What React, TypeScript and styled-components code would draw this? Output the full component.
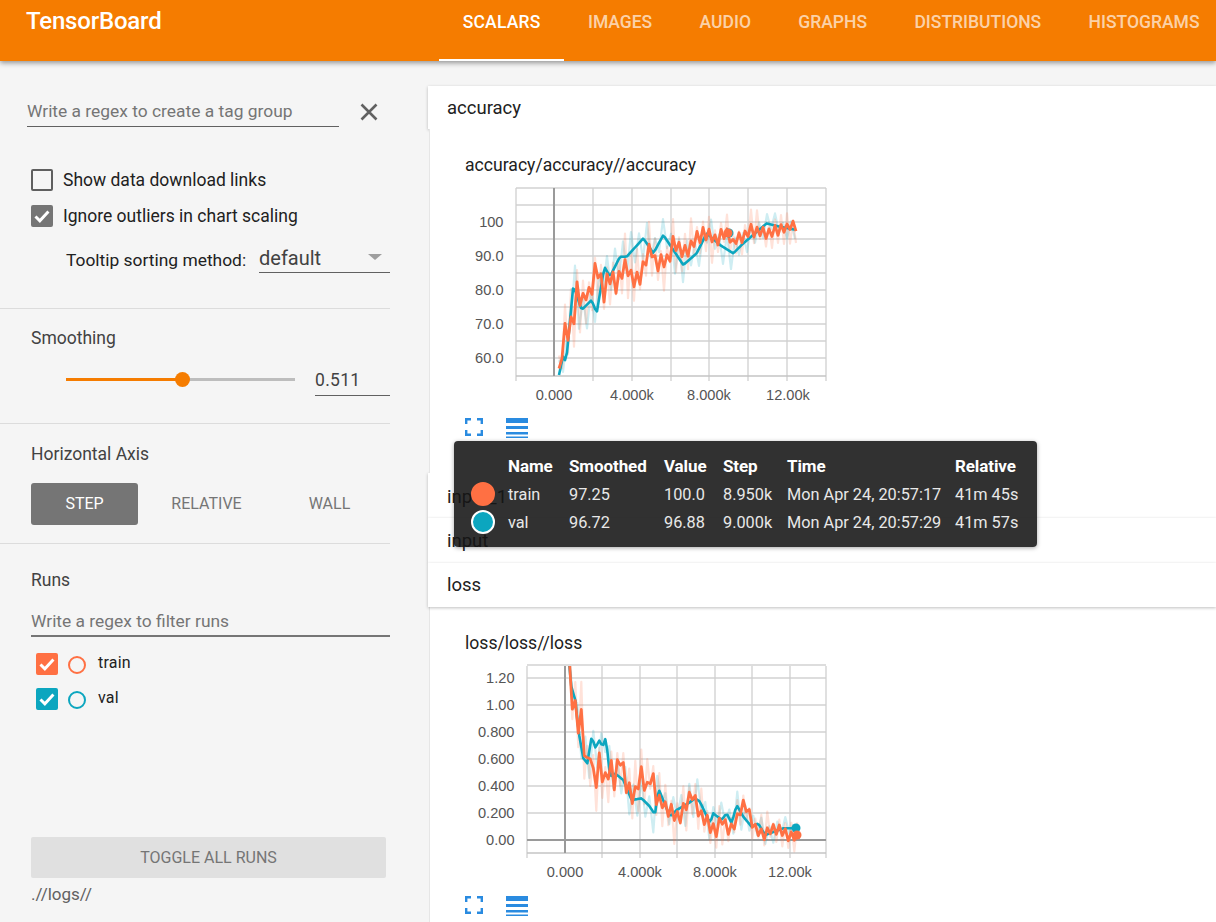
import React from 'react';
import styled, { createGlobalStyle } from 'styled-components';

const ORANGE = '#ff7043';
const TEAL = '#0ca6bf';
const SMOOTHING = 0.507;

const GlobalStyle = createGlobalStyle`
	html, body {
		margin: 0;
		padding: 0;
		background: #f5f5f5;
		font-family: Roboto, 'Liberation Sans', sans-serif;
		color: #212121;
	}
	* {
		box-sizing: border-box;
	}
`;

const Page = styled.div`
	width: 1216px;
	height: 922px;
	overflow: hidden;
	display: flex;
	flex-direction: column;
`;

const Toolbar = styled.header`
	flex: none;
	height: 61px;
	background: #f57c00;
	box-shadow: 0 2px 5px rgba(0, 0, 0, 0.4);
	display: flex;
	position: relative;
	z-index: 5;
`;

const Brand = styled.div`
	flex: none;
	width: 439px;
	padding: 7px 0 0 26px;
	font-size: 24px;
	line-height: 28px;
	font-weight: 500;
	letter-spacing: -0.2px;
	color: #fff;
`;

const Tabs = styled.nav`
	flex: none;
	display: flex;
	height: 61px;
`;

const Tab = styled.div<{ $active?: boolean }>`
	padding: 11px 23.7px 0;
	height: 61px;
	font-size: 17.5px;
	line-height: 22px;
	font-weight: 500;
	white-space: nowrap;
	letter-spacing: ${(p) => (p.$active ? 0.2 : 0)}px;
	color: ${(p) => (p.$active ? '#fff' : 'rgba(255, 255, 255, 0.68)')};
	border-bottom: 2px solid ${(p) => (p.$active ? '#fff' : 'transparent')};
`;

const Body = styled.div`
	flex: 1;
	display: flex;
	min-height: 0;
`;

const Sidebar = styled.aside`
	flex: none;
	width: 428px;
	height: 861px;
	display: flex;
	flex-direction: column;
	padding-right: 38px;
`;

const Section = styled.section<{ $height: number; $top: number }>`
	flex: none;
	height: ${(p) => p.$height}px;
	padding: ${(p) => p.$top}px 0 0 31px;
	border-bottom: 1px solid #dcdcdc;
`;

const BottomSection = styled.section`
	flex: 1;
	display: flex;
	flex-direction: column;
	padding: 25px 0 0 31px;
`;

const SectionTitle = styled.div`
	font-size: 17.5px;
	line-height: 22px;
	color: #424242;
`;

const AxisTitle = styled(SectionTitle)`
	padding-top: 1px;
	margin-bottom: -1px;
`;

const TagRow = styled.div`
	display: flex;
	align-items: flex-start;
	margin-left: -4px;
`;

const TextField = styled.input<{ $width: number; $thick?: boolean }>`
	width: ${(p) => p.$width}px;
	height: ${(p) => (p.$thick ? 30 : 32)}px;
	margin-top: ${(p) => (p.$thick ? 16 : 0)}px;
	flex: none;
	padding: 0;
	border: 0;
	border-bottom: ${(p) => (p.$thick ? 2 : 1)}px solid ${(p) => (p.$thick ? '#757575' : '#616161')};
	background: transparent;
	outline: none;
	font-family: inherit;
	font-size: 17.4px;
	&::placeholder {
		color: #757575;
		opacity: 1;
	}
`;

const ClearIcon = styled.svg`
	margin: 8px 0 0 21px;
	display: block;
`;

const CheckRow = styled.div<{ $top: number }>`
	display: flex;
	align-items: center;
	gap: 10px;
	height: 24px;
	margin-top: ${(p) => p.$top}px;
	font-size: 17.5px;
	color: #212121;
`;

const Box = styled.span<{ $color?: string; $size: number }>`
	flex: none;
	width: ${(p) => p.$size}px;
	height: ${(p) => p.$size}px;
	border-radius: 2px;
	border: 2px solid ${(p) => p.$color || '#5f5f5f'};
	background: ${(p) => p.$color || 'transparent'};
	display: flex;
	align-items: center;
	justify-content: center;
`;

const SortRow = styled.div`
	display: flex;
	align-items: flex-end;
	margin: 14px 0 0 35px;
	font-size: 17.4px;
`;

const SortLabel = styled.span`
	line-height: 24px;
	padding-bottom: 1px;
	width: 193px;
`;

const Dropdown = styled.div`
	position: relative;
	width: 131px;
	height: 31px;
	padding-top: 3px;
	border-bottom: 1px solid #616161;
	font-size: 20px;
	line-height: 27px;
	color: #424242;
`;

const Caret = styled.span`
	position: absolute;
	right: 8px;
	top: 12px;
	width: 0;
	height: 0;
	border-left: 7px solid transparent;
	border-right: 7px solid transparent;
	border-top: 6px solid #9e9e9e;
`;

const SliderRow = styled.div`
	display: flex;
	align-items: center;
	margin: 14px 0 0 35px;
`;

const SliderTrack = styled.div`
	position: relative;
	width: 229px;
	height: 3px;
	background: #bdbdbd;
`;

const SliderFill = styled.div`
	height: 3px;
	background: #f57c00;
`;

const SliderThumb = styled.span`
	position: absolute;
	top: -6px;
	width: 15px;
	height: 15px;
	margin-left: -7.5px;
	border-radius: 50%;
	background: #f57c00;
`;

const SliderValue = styled.div`
	margin-left: 20px;
	width: 75px;
	height: 33px;
	border-bottom: 1px solid #616161;
	font-size: 17.5px;
	line-height: 35px;
	letter-spacing: 0.3px;
	color: #424242;
`;

const AxisButtons = styled.div`
	display: flex;
	margin-top: 19px;
`;

const AxisButton = styled.div<{ $active?: boolean; $width: number }>`
	width: ${(p) => p.$width}px;
	height: 42px;
	padding-bottom: 1px;
	border-radius: 3px;
	display: flex;
	align-items: center;
	justify-content: center;
	font-size: 16px;
	color: ${(p) => (p.$active ? '#fff' : '#757575')};
	background: ${(p) => (p.$active ? '#757575' : 'transparent')};
`;

const RunRow = styled.div<{ $top: number }>`
	display: flex;
	align-items: center;
	height: 22px;
	flex: none;
	margin: ${(p) => p.$top}px 0 0 5px;
`;

const RunRing = styled.span<{ $color: string }>`
	width: 18px;
	height: 18px;
	margin: 1px 12px 0 10px;
	border-radius: 50%;
	border: 2px solid ${(p) => p.$color};
`;

const RunName = styled.span`
	font-size: 16px;
	line-height: 20px;
	margin-top: -3px;
	letter-spacing: 0.2px;
`;

const ToggleButton = styled.div`
	margin-top: auto;
	width: 355px;
	height: 41px;
	flex: none;
	border-radius: 2px;
	background: #e0e0e0;
	color: #757575;
	font-size: 16px;
	display: flex;
	align-items: center;
	justify-content: center;
`;

const LogDir = styled.div`
	font-size: 17px;
	line-height: 20px;
	margin: 6px 0 18px;
	color: #616161;
`;

const Main = styled.main`
	flex: 1;
	min-width: 0;
	padding-top: 25px;
`;

const CategoryHead = styled.div<{ $height: number; $top: number }>`
	height: ${(p) => p.$height}px;
	padding: ${(p) => p.$top}px 0 0 19px;
	background: #fff;
	font-size: 18.5px;
	line-height: 22px;
	color: #212121;
	box-shadow: 0 1px 3px rgba(0, 0, 0, 0.25);
	position: relative;
	z-index: 1;
`;

const CategoryPanel = styled.div`
	position: relative;
	margin-left: 1px;
	padding-top: 25px;
	background: #fff;
	border-left: 1px solid #e6e6e6;
`;

const AccuracyPanel = styled(CategoryPanel)`
	height: 344px;
	z-index: 3;
	background: transparent;
`;

const PanelSheet = styled.div`
	position: absolute;
	inset: 0;
	background: #fff;
	z-index: -1;
`;

const LossPanel = styled(CategoryPanel)`
	height: 320px;
`;

const ChartTitle = styled.div`
	padding-left: 35px;
	font-size: 17.6px;
	line-height: 22px;
	color: #212121;
`;

const ChartSvg = styled.svg`
	display: block;
	margin: 4px 0 0 30px;
`;

const AxisText = styled.text`
	font-family: 'Liberation Sans', Arial, sans-serif;
	font-size: 14.6px;
	fill: #555;
`;

const ChartActions = styled.div`
	display: flex;
	gap: 23px;
	margin: 13px 0 0 35px;
`;

const ActionIcon = styled.svg`
	display: block;
	fill: #2a8be0;
`;

const Tooltip = styled.div`
	position: absolute;
	left: 24px;
	top: 312px;
	width: 583px;
	height: 106px;
	padding: 11px 0 0 17px;
	border-radius: 4px;
	background: rgba(20, 20, 20, 0.88);
	box-shadow: 0 1px 4px rgba(0, 0, 0, 0.35);
	color: #fff;
	font-size: 16.3px;
`;

const TooltipRow = styled.div<{ $head?: boolean }>`
	display: grid;
	grid-template-columns: 37px 61px 95px 59px 64px 168px 82px;
	height: 28px;
	align-items: center;
	white-space: nowrap;
	font-size: ${(p) => (p.$head ? 17 : 16.3)}px;
	font-weight: ${(p) => (p.$head ? 700 : 400)};
	letter-spacing: ${(p) => (p.$head ? -0.1 : 0)}px;
	color: ${(p) => (p.$head ? '#fff' : '#e8e8e8')};
`;

const TooltipDot = styled.span<{ $color: string; $ring?: boolean }>`
	width: 24px;
	height: 24px;
	border-radius: 50%;
	background: ${(p) => p.$color};
	border: 2px solid ${(p) => (p.$ring ? '#fff' : p.$color)};
`;

type Pt = [number, number];

const accVal: Pt[] = [[327, 615], [340, 555], [348, 580], [370, 345], [395, 420], [425, 390], [440, 430], [463, 290], [480, 320], [510, 260], [530, 260], [580, 205], [610, 250], [640, 195], [670, 240], [700, 285], [740, 250], [770, 190], [810, 225], [850, 250], [880, 220], [950, 160], [990, 170], [1040, 180]];
const accTrain: Pt[] = [[327, 615], [335, 530], [345, 490], [370, 440], [382, 350], [395, 420], [405, 330], [415, 400], [440, 280], [460, 370], [480, 320], [500, 340], [530, 270], [545, 340], [570, 310], [600, 235], [620, 280], [650, 280], [670, 210], [700, 250], [740, 210], [765, 180], [790, 210], [830, 185], [850, 220], [900, 180], [960, 190], [1000, 170], [1040, 170]];
const lossVal: Pt[] = [[358, 45], [365, 120], [375, 140], [385, 240], [400, 325], [412, 340], [425, 260], [437, 295], [447, 270], [458, 290], [468, 262], [480, 380], [495, 370], [520, 390], [545, 450], [575, 445], [600, 470], [615, 495], [625, 415], [660, 500], [680, 480], [715, 460], [735, 445], [750, 455], [780, 520], [790, 490], [815, 510], [830, 490], [845, 520], [860, 465], [880, 500], [905, 530], [925, 520], [945, 555], [1000, 535], [1040, 535]];
const lossTrain: Pt[] = [[358, 45], [362, 125], [375, 160], [378, 225], [395, 190], [400, 260], [412, 345], [425, 300], [432, 395], [452, 335], [462, 405], [480, 345], [495, 395], [510, 320], [530, 400], [550, 445], [570, 370], [590, 420], [605, 350], [620, 450], [650, 470], [680, 510], [725, 430], [760, 510], [795, 540], [815, 510], [845, 540], [880, 460], [915, 530], [935, 555], [960, 540], [985, 535], [1010, 555], [1045, 555]];

// interpolate hand-read points and add seeded jitter so lines look like noisy training data
const buildLine = (pts: Pt[], ox: number, oy: number, noise: number, seed: number, step = 8) => {
	let s = seed;
	const rnd = () => {
		s = (s * 1664525 + 1013904223) % 4294967296;
		return s / 4294967296;
	};
	const out: string[] = [];
	const x0 = pts[0][0];
	const x1 = pts[pts.length - 1][0];
	let i = 0;
	let flip = 1;
	for (let x = x0; x <= x1; x += step) {
		while (i < pts.length - 2 && pts[i + 1][0] < x) i++;
		const [ax, ay] = pts[i];
		const [bx, by] = pts[i + 1];
		const y = ay + ((by - ay) * (x - ax)) / (bx - ax);
		const decay = 1 - ((x - x0) / (x1 - x0)) * 0.6;
		flip = -flip;
		const jitter = noise === 0 ? 0 : flip * (0.3 + 0.7 * rnd()) * noise * decay;
		out.push(`${(ox + x / 3).toFixed(1)},${(oy + (y + jitter) / 3).toFixed(1)}`);
	}
	return out.join(' ');
};

interface ChartProps {
	id: string;
	top: number;
	left: number;
	bottom: number;
	originY: number;
	xs: number[];
	xLabels: [number, string][];
	yLines: number[];
	yLabels: [number, string][];
	zeroY?: number;
	zeroX: number;
	val: Pt[];
	train: Pt[];
	dots: [number, number, string][];
}

const Chart: React.FC<ChartProps> = ({ id, top, left, bottom, originY, xs, xLabels, yLines, yLabels, zeroX, zeroY, val, train, dots }) => (
	<ChartSvg width={372} height={225} viewBox={`460 ${top} 372 225`}>
		<defs>
			<clipPath id={id}>
				<rect x={left} y={top + 8} width={826 - left} height={bottom - top - 8} />
			</clipPath>
		</defs>
		{yLines.map((y) => (
			<line key={y} x1={left} x2={826} y1={y} y2={y} stroke='#d2d2d2' strokeWidth={1.3} />
		))}
		{xs.map((x) => (
			<line key={x} x1={x} x2={x} y1={top + 8} y2={bottom + 5} stroke='#cfcfcf' strokeWidth={1.3} />
		))}
		<line x1={left} x2={826} y1={bottom} y2={bottom} stroke='#c4c4c4' strokeWidth={1.3} />
		<line x1={zeroX} x2={zeroX} y1={top + 8} y2={bottom} stroke='#9a9a9a' strokeWidth={2} />
		{zeroY ? <line x1={left} x2={826} y1={zeroY} y2={zeroY} stroke='#9a9a9a' strokeWidth={2} /> : null}
		<g clipPath={`url(#${id})`} fill='none' strokeLinejoin='round'>
			<polyline points={buildLine(val, 450, originY, 95, 11, 12)} stroke={TEAL} strokeOpacity={0.2} strokeWidth={2.2} />
			<polyline points={buildLine(train, 450, originY, 125, 23, 9)} stroke={ORANGE} strokeOpacity={0.2} strokeWidth={2.2} />
			<polyline points={buildLine(val, 450, originY, 0, 5, 6)} stroke={TEAL} strokeWidth={2.6} />
			<polyline points={buildLine(train, 450, originY, 42, 7, 9)} stroke={ORANGE} strokeWidth={2.8} />
		</g>
		{dots.map(([cx, cy, color]) => (
			<circle key={color} cx={cx} cy={cy} r={4.5} fill={color} />
		))}
		{xLabels.map(([x, label]) => (
			<AxisText key={label} x={x} y={bottom + 24} textAnchor='middle'>
				{label}
			</AxisText>
		))}
		{yLabels.map(([y, label]) => (
			<AxisText key={label} x={left - 12.5} y={y + 5} textAnchor='end'>
				{label}
			</AxisText>
		))}
	</ChartSvg>
);

const Actions: React.FC = () => (
	<ChartActions>
		<ActionIcon width={18} height={18} viewBox='0 0 18 18'>
			<path d='M0 0h6v2.4H2.4V6H0zM12 0h6v6h-2.4V2.4H12zM0 12h2.4v3.6H6V18H0zM15.6 12H18v6h-6v-2.4h3.6z' />
		</ActionIcon>
		<ActionIcon width={22} height={20} viewBox='0 0 22 20'>
			<path d='M0 0h22v5H0zM0 8h22v3H0zM0 14h22v2.4H0zM0 18.6h22V20H0z' />
		</ActionIcon>
	</ChartActions>
);

const Check: React.FC<{ size: number }> = ({ size }) => (
	<svg width={size} height={size} viewBox='0 0 16 16' fill='none'>
		<path d='M2.2 8.4l3.9 3.9 7.6-8.2' stroke='#fff' strokeWidth={2.6} />
	</svg>
);

const tooltipRows = [
	{ name: 'train', color: ORANGE, ring: false, smoothed: '97.25', value: '100.0', step: '8.950k', time: 'Mon Apr 24, 20:57:17', relative: '41m 45s' },
	{ name: 'val', color: TEAL, ring: true, smoothed: '96.72', value: '96.88', step: '9.000k', time: 'Mon Apr 24, 20:57:29', relative: '41m 57s' },
];

const App: React.FC = () => {
	return (
		<Page>
			<GlobalStyle />
			<Toolbar>
				<Brand>TensorBoard</Brand>
				<Tabs>
					<Tab $active>SCALARS</Tab>
					<Tab>IMAGES</Tab>
					<Tab>AUDIO</Tab>
					<Tab>GRAPHS</Tab>
					<Tab>DISTRIBUTIONS</Tab>
					<Tab>HISTOGRAMS</Tab>
				</Tabs>
			</Toolbar>
			<Body>
				<Sidebar>
					<Section $height={248} $top={34}>
						<TagRow>
							<TextField $width={312} placeholder='Write a regex to create a tag group' />
							<ClearIcon width={18} height={18} viewBox='0 0 18 18'>
								<path d='M1.5 1.5l15 15M16.5 1.5l-15 15' stroke='#616161' strokeWidth={2.6} />
							</ClearIcon>
						</TagRow>
						<CheckRow $top={41}>
							<Box $size={22} />
							Show data download links
						</CheckRow>
						<CheckRow $top={12}>
							<Box $size={22} $color='#757575'>
								<Check size={18} />
							</Box>
							Ignore outliers in chart scaling
						</CheckRow>
						<SortRow>
							<SortLabel>Tooltip sorting method:</SortLabel>
							<Dropdown>
								default
								<Caret />
							</Dropdown>
						</SortRow>
					</Section>
					<Section $height={115} $top={18}>
						<SectionTitle>Smoothing</SectionTitle>
						<SliderRow>
							<SliderTrack>
								<SliderFill style={{ width: `${SMOOTHING * 100}%` }} />
								<SliderThumb style={{ left: `${SMOOTHING * 100}%` }} />
							</SliderTrack>
							<SliderValue>0.511</SliderValue>
						</SliderRow>
					</Section>
					<Section $height={120} $top={18}>
						<AxisTitle>Horizontal Axis</AxisTitle>
						<AxisButtons>
							<AxisButton $active $width={107}>STEP</AxisButton>
							<AxisButton $width={137}>RELATIVE</AxisButton>
							<AxisButton $width={109}>WALL</AxisButton>
						</AxisButtons>
					</Section>
					<BottomSection>
						<SectionTitle>Runs</SectionTitle>
						<TextField $width={359} $thick placeholder='Write a regex to filter runs' />
						<RunRow $top={16}>
							<Box $size={22} $color={ORANGE}>
								<Check size={18} />
							</Box>
							<RunRing $color={ORANGE} />
							<RunName>train</RunName>
						</RunRow>
						<RunRow $top={13}>
							<Box $size={22} $color={TEAL}>
								<Check size={18} />
							</Box>
							<RunRing $color={TEAL} />
							<RunName>val</RunName>
						</RunRow>
						<ToggleButton>TOGGLE ALL RUNS</ToggleButton>
						<LogDir>.//logs//</LogDir>
					</BottomSection>
				</Sidebar>
				<Main>
					<CategoryHead $height={43} $top={11}>accuracy</CategoryHead>
					<AccuracyPanel>
						<PanelSheet />
						<ChartTitle>accuracy/accuracy//accuracy</ChartTitle>
						<Chart
							id='acc'
							top={180}
							left={516}
							bottom={376}
							originY={170}
							zeroX={554}
							xs={[516, 593, 632, 671, 709, 748, 787, 826]}
							xLabels={[[554, '0.000'], [632, '4.000k'], [709, '8.000k'], [788, '12.00k']]}
							yLines={[188, 205, 222, 239, 256, 273, 290, 307, 324, 341, 358]}
							yLabels={[[222, '100'], [256, '90.0'], [290, '80.0'], [324, '70.0'], [358, '60.0']]}
							val={accVal}
							train={accTrain}
							dots={[[729, 233, TEAL], [728, 233, ORANGE]]}
						/>
						<Actions />
						<Tooltip>
							<TooltipRow $head>
								<span />
								<span>Name</span>
								<span>Smoothed</span>
								<span>Value</span>
								<span>Step</span>
								<span>Time</span>
								<span>Relative</span>
							</TooltipRow>
							{tooltipRows.map((row) => (
								<TooltipRow key={row.name}>
									<TooltipDot $color={row.color} $ring={row.ring} />
									<span>{row.name}</span>
									<span>{row.smoothed}</span>
									<span>{row.value}</span>
									<span>{row.step}</span>
									<span>{row.time}</span>
									<span>{row.relative}</span>
								</TooltipRow>
							))}
						</Tooltip>
					</AccuracyPanel>
					<CategoryHead $height={45} $top={13}>input_1</CategoryHead>
					<CategoryHead $height={45} $top={12}>input</CategoryHead>
					<CategoryHead $height={44} $top={11}>loss</CategoryHead>
					<LossPanel>
						<ChartTitle>loss/loss//loss</ChartTitle>
						<Chart
							id='loss'
							top={658}
							left={527}
							bottom={853}
							originY={650}
							zeroX={565}
							zeroY={840}
							xs={[527, 602, 640, 677, 715, 752, 790, 826]}
							xLabels={[[565, '0.000'], [640, '4.000k'], [715, '8.000k'], [790, '12.00k']]}
							yLines={[665, 678, 705, 732, 759, 786, 813]}
							yLabels={[[678, '1.20'], [705, '1.00'], [732, '0.800'], [759, '0.600'], [786, '0.400'], [813, '0.200'], [840, '0.00']]}
							val={lossVal}
							train={lossTrain}
							dots={[[796, 828, TEAL], [797, 835, ORANGE]]}
						/>
						<Actions />
					</LossPanel>
				</Main>
			</Body>
		</Page>
	);
};

export default App;
